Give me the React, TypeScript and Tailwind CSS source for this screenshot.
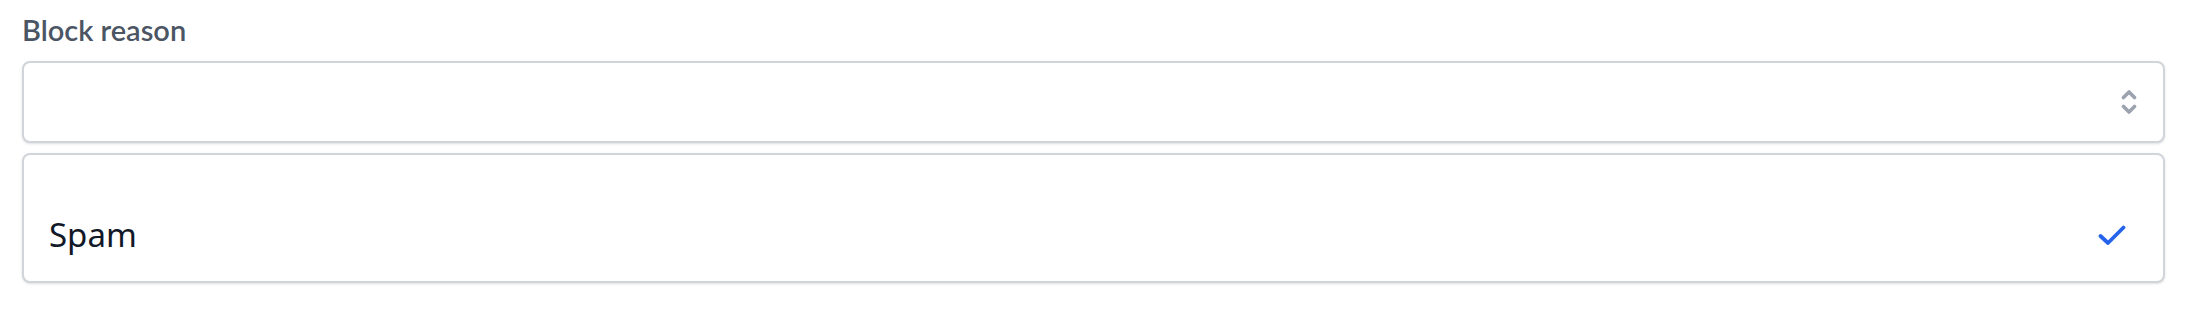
import React from 'react';

const ChevronUpDown = () => (
  <svg viewBox="0 0 16 28" className="h-[28px] w-[16px]" fill="none" stroke="#9ca3af" strokeWidth={3.6} strokeLinecap="round" strokeLinejoin="round">
    <path d="M2.5 9.5 L8 4 L13.5 9.5" />
    <path d="M2.5 18.5 L8 24 L13.5 18.5" />
  </svg>
);

const Check = () => (
  <svg viewBox="0 0 28 22" className="h-[22px] w-[28px]" fill="none" stroke="#2563eb" strokeWidth={3.8} strokeLinecap="round" strokeLinejoin="round">
    <path d="M2.5 12 L10 19 L25.5 3.5" />
  </svg>
);

export default function App() {
  return (
    <div className="min-h-[312px] bg-white pl-[22px] pr-[27px] pt-[12px]">
      {/* Label */}
      <label className="block text-[29px] font-semibold leading-[36px] text-[#4b5563]" style={{ fontFamily: 'Lato, sans-serif' }}>
        Block reason
      </label>

      {/* Select button */}
      <div className="mt-[13px] flex h-[82px] items-center justify-end rounded-[8px] border-2 border-[#d1d5db] bg-white pr-[26px] shadow-sm">
        <ChevronUpDown />
      </div>

      {/* Options list */}
      <div className="mt-[10px] flex h-[130px] flex-col justify-end rounded-[8px] border-2 border-[#d1d5db] bg-white pb-[26px] shadow-sm">
        <div className="flex items-center justify-between pl-[25px] pr-[37px]">
          <span className="text-[33px] leading-[40px] text-[#111827]" style={{ fontFamily: '"Noto Sans", sans-serif' }}>
            Spam
          </span>
          <Check />
        </div>
      </div>
    </div>
  );
}
